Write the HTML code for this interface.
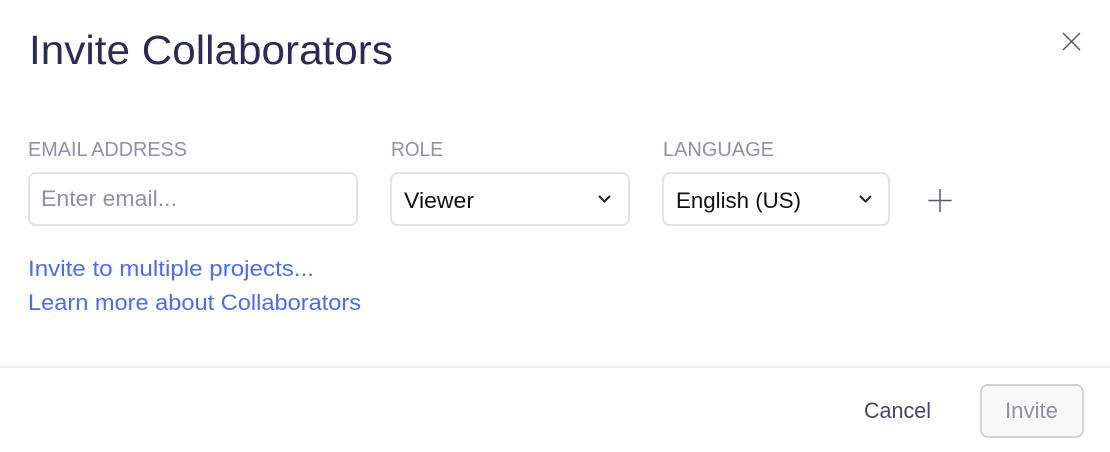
<!DOCTYPE html>
<html><head><meta charset="utf-8"><style>
html,body{margin:0;padding:0;background:#fff;width:1110px;height:452px;overflow:hidden}
svg{display:block}
text{font-family:"Liberation Sans",sans-serif}
</style></head><body>
<svg width="1110" height="452" viewBox="0 0 1110 452" xmlns="http://www.w3.org/2000/svg">
<rect width="1110" height="452" fill="#fff"/>
<text x="29" y="64" font-size="41" fill="#2a2c55" textLength="364" lengthAdjust="spacingAndGlyphs">Invite Collaborators</text>
<path d="M1063 33L1080 50M1080 33L1063 50" stroke="#55557a" stroke-width="1.5" fill="none"/>
<text x="28" y="156" font-size="20" fill="#8f8fa8" textLength="159" lengthAdjust="spacingAndGlyphs">EMAIL ADDRESS</text>
<text x="391" y="156" font-size="20" fill="#8f8fa8" textLength="52" lengthAdjust="spacingAndGlyphs">ROLE</text>
<text x="663" y="156" font-size="20" fill="#8f8fa8" textLength="111" lengthAdjust="spacingAndGlyphs">LANGUAGE</text>
<rect x="29" y="173" width="328" height="52" rx="7" fill="#fff" stroke="#e2e2e2" stroke-width="2"/>
<rect x="391" y="173" width="238" height="52" rx="7" fill="#fff" stroke="#e2e2e2" stroke-width="2"/>
<rect x="663" y="173" width="226" height="52" rx="7" fill="#fff" stroke="#e2e2e2" stroke-width="2"/>
<text x="41" y="206" font-size="22" fill="#8f8fa8" textLength="136" lengthAdjust="spacingAndGlyphs">Enter email...</text>
<text x="404" y="208" font-size="22" fill="#111" textLength="70" lengthAdjust="spacingAndGlyphs">Viewer</text>
<text x="676" y="208" font-size="22" fill="#111" textLength="125" lengthAdjust="spacingAndGlyphs">English (US)</text>
<path d="M599 196L604.500 201.500L610 196" stroke="#222" stroke-width="2" fill="none"/>
<path d="M860 196L865.500 201.500L871 196" stroke="#222" stroke-width="2" fill="none"/>
<path d="M940 189V212M928.500 200.500H951.500" stroke="#55557a" stroke-width="1.500" fill="none"/>
<text x="28" y="276" font-size="22" fill="#4a6cf0" textLength="286" lengthAdjust="spacingAndGlyphs">Invite to multiple projects...</text>
<text x="28" y="310" font-size="22" fill="#4a6cf0" textLength="333" lengthAdjust="spacingAndGlyphs">Learn more about Collaborators</text>
<rect x="0" y="366" width="1110" height="2" fill="#f0f0f0"/>
<text x="864" y="418" font-size="22" fill="#45456b" textLength="67" lengthAdjust="spacingAndGlyphs">Cancel</text>
<rect x="981" y="385" width="102" height="52" rx="7" fill="#f8f8f8" stroke="#d2d2d2" stroke-width="2"/>
<text x="1005" y="418" font-size="22" fill="#8f8fa8" textLength="53" lengthAdjust="spacingAndGlyphs">Invite</text>
</svg>
</body></html>
